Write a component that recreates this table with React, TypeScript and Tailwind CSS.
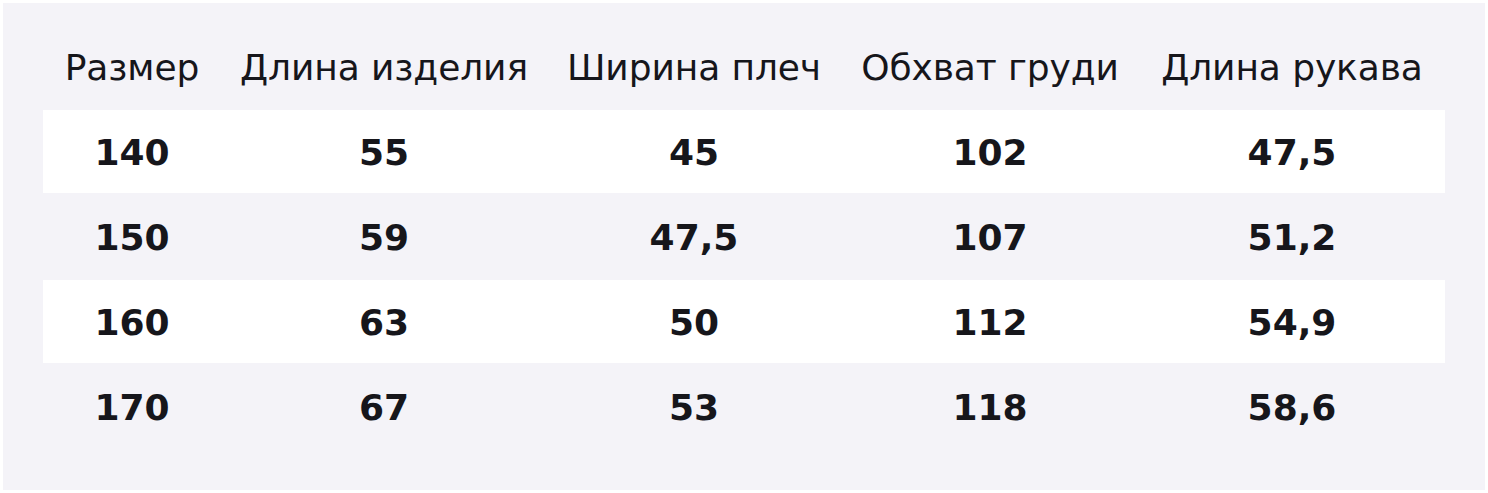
import React from "react";

const headers = ["Размер", "Длина изделия", "Ширина плеч", "Обхват груди", "Длина рукава"];
const rows = [
  ["140", "55", "45", "102", "47,5"],
  ["150", "59", "47,5", "107", "51,2"],
  ["160", "63", "50", "112", "54,9"],
  ["170", "67", "53", "118", "58,6"],
];

export default function App() {
  return (
    <div className="w-[1488px] h-[493px] bg-white p-[3px]" style={{ fontFamily: '"DejaVu Sans", sans-serif' }}>
      <div className="w-[1482px] h-[487px] bg-[#f4f3f8] pt-[22px] px-[40px] text-[#16161b]">
        <div className="grid grid-cols-[178px_326px_294px_298px_306px] h-[85px] items-center text-[36px] leading-[42px] tracking-[-0.1px]">
          {headers.map((h) => (
            <div key={h} className="text-center whitespace-nowrap">{h}</div>
          ))}
        </div>
        {rows.map((r, i) => (
          <div
            key={i}
            className={`grid grid-cols-[178px_326px_294px_298px_306px] h-[85px] items-center text-[36px] leading-[42px] font-bold ${
              i % 2 === 0 ? "bg-white border-b-2 border-[#f4f3f8]" : ""
            }`}
          >
            {r.map((c, j) => (
              <div key={j} className={`text-center ${i % 2 === 0 ? "pt-[2px]" : ""}`}>{c}</div>
            ))}
          </div>
        ))}
      </div>
    </div>
  );
}
